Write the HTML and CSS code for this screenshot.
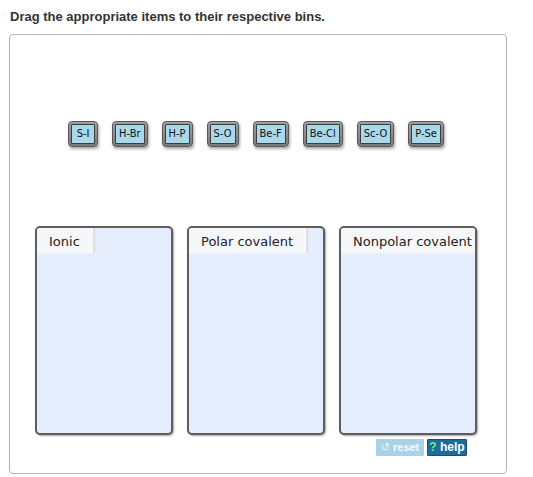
FILE: index.html
```html
<!DOCTYPE html>
<html>
<head>
<meta charset="utf-8">
<link rel="stylesheet" href="styles.css">
</head>
<body>
<div class="page">
  <h1 class="title">Drag the appropriate items to their respective bins.</h1>
  <div class="board">
    <div class="tiles">
      <div class="tile"><span class="tile-face">S-I</span></div>
      <div class="tile"><span class="tile-face">H-Br</span></div>
      <div class="tile"><span class="tile-face">H-P</span></div>
      <div class="tile"><span class="tile-face">S-O</span></div>
      <div class="tile"><span class="tile-face">Be-F</span></div>
      <div class="tile"><span class="tile-face">Be-Cl</span></div>
      <div class="tile"><span class="tile-face">Sc-O</span></div>
      <div class="tile"><span class="tile-face">P-Se</span></div>
    </div>
    <div class="bins">
      <div class="bin"><div class="bin-head"><span class="bin-label">Ionic</span></div></div>
      <div class="bin"><div class="bin-head"><span class="bin-label">Polar covalent</span></div></div>
      <div class="bin"><div class="bin-head"><span class="bin-label">Nonpolar covalent</span></div></div>
    </div>
    <div class="actions">
      <span class="btn btn-reset"><span class="reset-icon">&#8634;</span> reset</span>
      <span class="btn btn-help"><span class="help-q">?</span> help</span>
    </div>
  </div>
</div>
</body>
</html>
```
FILE: styles.css
```css
html, body {
  margin: 0;
  padding: 0;
  background: #ffffff;
}
.page {
  padding: 9px 0 0 9px;
  font-family: "Liberation Sans", Arial, sans-serif;
}
.title {
  margin: 0 0 9px 1px;
  font-size: 13px;
  line-height: 16px;
  font-weight: bold;
  color: #333333;
}
.board {
  box-sizing: border-box;
  width: 498px;
  height: 440px;
  border: 1px solid #b4b4b4;
  border-radius: 4px;
}
.tiles {
  display: flex;
  justify-content: center;
  gap: 14px;
  margin: 86px 4px 0 0;
  height: 26px;
}
.tile {
  box-sizing: border-box;
  min-width: 30px;
  height: 26px;
  padding: 2px;
  background: linear-gradient(#a0a0a0, #7a7a7a);
  border: 1px solid #5a5a5a;
  border-radius: 4px;
  box-shadow: 1px 2px 3px rgba(0, 0, 0, 0.35);
  display: flex;
}
.tile-face {
  display: block;
  flex: 1;
  box-sizing: border-box;
  height: 20px;
  padding: 0 3px;
  line-height: 18px;
  text-align: center;
  background: #a8d8ea;
  border: 1px solid #3c3c3c;
  border-radius: 1px;
  font-family: "DejaVu Sans Condensed", "DejaVu Sans", Verdana, sans-serif;
  font-size: 11px;
  color: #111111;
}
.bins {
  display: flex;
  gap: 14px;
  margin: 79px 0 0 25px;
}
.bin {
  box-sizing: border-box;
  width: 138px;
  height: 209px;
  background: #e6edfc;
  border: 2px solid #5e5e5e;
  border-radius: 5px;
  box-shadow: 1px 1px 2px rgba(0, 0, 0, 0.35);
  overflow: hidden;
}
.bin-head {
  height: 25px;
  white-space: nowrap;
  overflow: hidden;
}
.bin-label {
  display: inline-block;
  box-sizing: border-box;
  height: 25px;
  padding: 5px 13px 0 12px;
  line-height: 18px;
  background: #f6f7f9;
  border-right: 1px solid #e2e4ea;
  box-shadow: 1px 0 1px #d8dbe2;
  font-family: "DejaVu Sans", Verdana, sans-serif;
  font-size: 13px;
  color: #222222;
}
.actions {
  display: flex;
  justify-content: flex-end;
  gap: 3px;
  margin: 4px 39px 0 0;
}
.btn {
  box-sizing: border-box;
  height: 17px;
  line-height: 17px;
  font-family: "Liberation Sans", Arial, sans-serif;
  font-size: 11px;
  font-weight: bold;
  color: #ffffff;
  border-radius: 1px;
  text-align: center;
}
.btn-reset {
  width: 48px;
  background: #a9d2e6;
  color: #f4fbff;
}
.reset-icon {
  font-family: "DejaVu Sans", sans-serif;
  font-weight: normal;
  color: #e6f4fb;
}
.btn-help {
  width: 40px;
  background: #1e6b9c;
  border: 1px solid #14507a;
  line-height: 15px;
  font-size: 12px;
}
.help-q {
  color: #6ff06a;
  font-size: 12px;
}
```
